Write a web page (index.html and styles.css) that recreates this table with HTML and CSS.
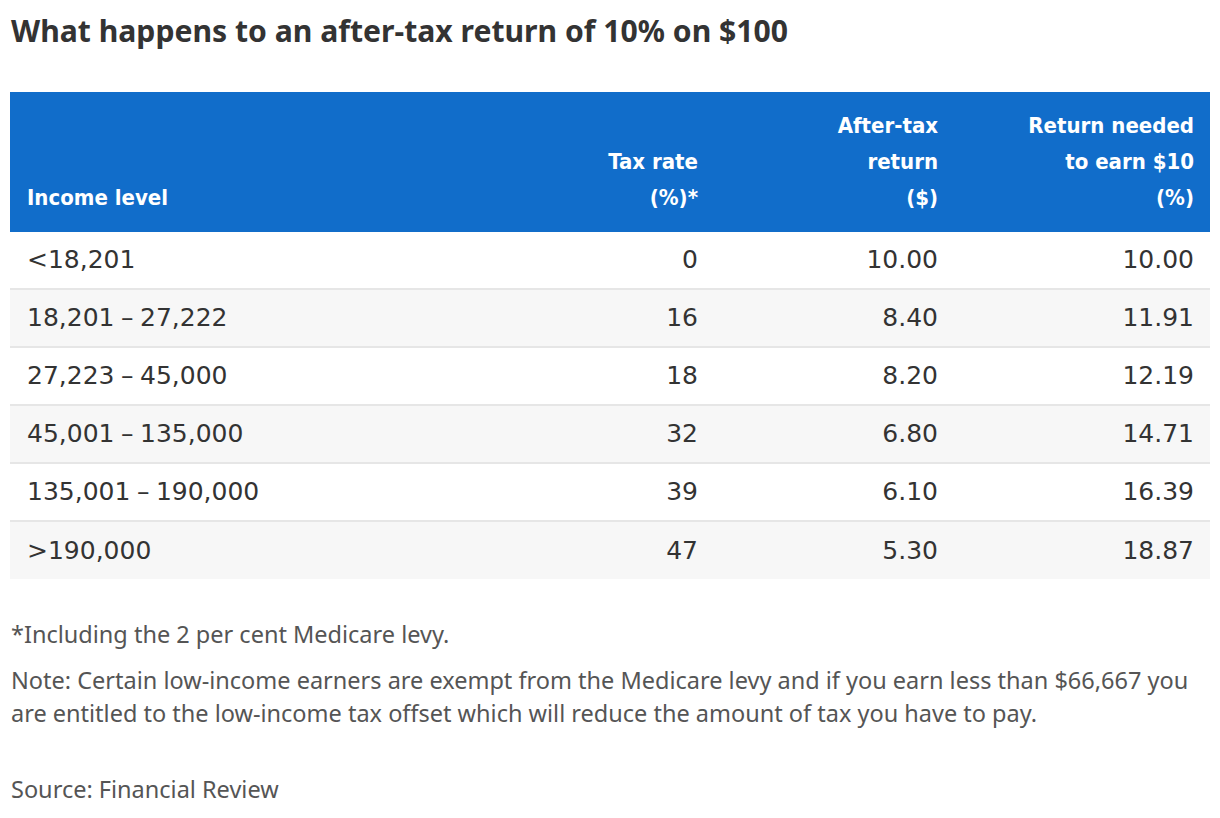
FILE: index.html
```html
<!DOCTYPE html>
<html lang="en">
<head>
<meta charset="utf-8">
<title>What happens to an after-tax return of 10% on $100</title>
<link rel="stylesheet" href="styles.css">
</head>
<body>
<div class="chart">
  <h1 class="title">What happens to an after-tax return of 10% on $100</h1>
  <div class="table">
    <div class="row head">
      <div class="cell">Income level</div>
      <div class="cell num">Tax rate<br>(%)*</div>
      <div class="cell num">After-tax<br>return<br>($)</div>
      <div class="cell num">Return needed<br>to earn $10<br>(%)</div>
    </div>
    <div class="row">
      <div class="cell">&lt;18,201</div>
      <div class="cell num">0</div>
      <div class="cell num">10.00</div>
      <div class="cell num">10.00</div>
    </div>
    <div class="row alt">
      <div class="cell">18,201<span class="dash">–</span>27,222</div>
      <div class="cell num">16</div>
      <div class="cell num">8.40</div>
      <div class="cell num">11.91</div>
    </div>
    <div class="row">
      <div class="cell">27,223<span class="dash">–</span>45,000</div>
      <div class="cell num">18</div>
      <div class="cell num">8.20</div>
      <div class="cell num">12.19</div>
    </div>
    <div class="row alt">
      <div class="cell">45,001<span class="dash">–</span>135,000</div>
      <div class="cell num">32</div>
      <div class="cell num">6.80</div>
      <div class="cell num">14.71</div>
    </div>
    <div class="row">
      <div class="cell">135,001<span class="dash">–</span>190,000</div>
      <div class="cell num">39</div>
      <div class="cell num">6.10</div>
      <div class="cell num">16.39</div>
    </div>
    <div class="row alt last">
      <div class="cell">&gt;190,000</div>
      <div class="cell num">47</div>
      <div class="cell num">5.30</div>
      <div class="cell num">18.87</div>
    </div>
  </div>
  <div class="notes">
    <p class="footnote">*Including the 2 per cent Medicare levy.</p>
    <p class="note">Note: Certain low-income earners are exempt from the Medicare levy and if you earn less than $66,667 you are entitled to the low-income tax offset which will reduce the amount of tax you have to pay.</p>
    <p class="source">Source: Financial Review</p>
  </div>
</div>
</body>
</html>
```
FILE: styles.css
```css
html, body {
  margin: 0;
  padding: 0;
  background: #ffffff;
}

.chart {
  padding: 11px 10px 0 10px;
  width: 1200px;
}

.title {
  margin: 0 0 0 1px;
  font-family: "Noto Sans", sans-serif;
  font-weight: 700;
  font-size: 30.15px;
  line-height: 40px;
  color: #333333;
}

.table {
  margin-top: 41px;
  display: flex;
  flex-direction: column;
}

.row {
  display: grid;
  grid-template-columns: 1fr 240px 240px 256px;
  height: 58px;
  box-sizing: border-box;
  border-bottom: 2px solid #e6e6e6;
  background: #ffffff;
  font-family: "DejaVu Sans", sans-serif;
  font-size: 25px;
  color: #333333;
}

.row.alt {
  background: #f7f7f7;
}

.row.last {
  border-bottom: none;
  height: 57px;
}

.row .cell {
  display: flex;
  align-items: center;
  padding: 0 16px 0 17px;
  padding-bottom: 1px;
  white-space: nowrap;
}

.row .cell.num {
  justify-content: flex-end;
  text-align: right;
}

.dash {
  margin: 0 6.5px;
}

.row.head {
  height: 140px;
  background: #116dca;
  border-bottom: none;
  font-family: "DejaVu Sans Condensed", "DejaVu Sans", sans-serif;
  font-weight: 700;
  font-size: 22px;
  line-height: 36px;
  color: #ffffff;
}

.row.head .cell {
  align-items: flex-end;
  padding-bottom: 16px;
}

.notes {
  margin-top: 39px;
  padding-left: 1px;
  font-family: "Noto Sans", sans-serif;
  font-size: 23.5px;
  line-height: 33px;
  color: #555555;
}

.notes p {
  margin: 0;
}

.notes .note {
  margin-top: 13px;
}

.notes .source {
  margin-top: 43px;
}
```
